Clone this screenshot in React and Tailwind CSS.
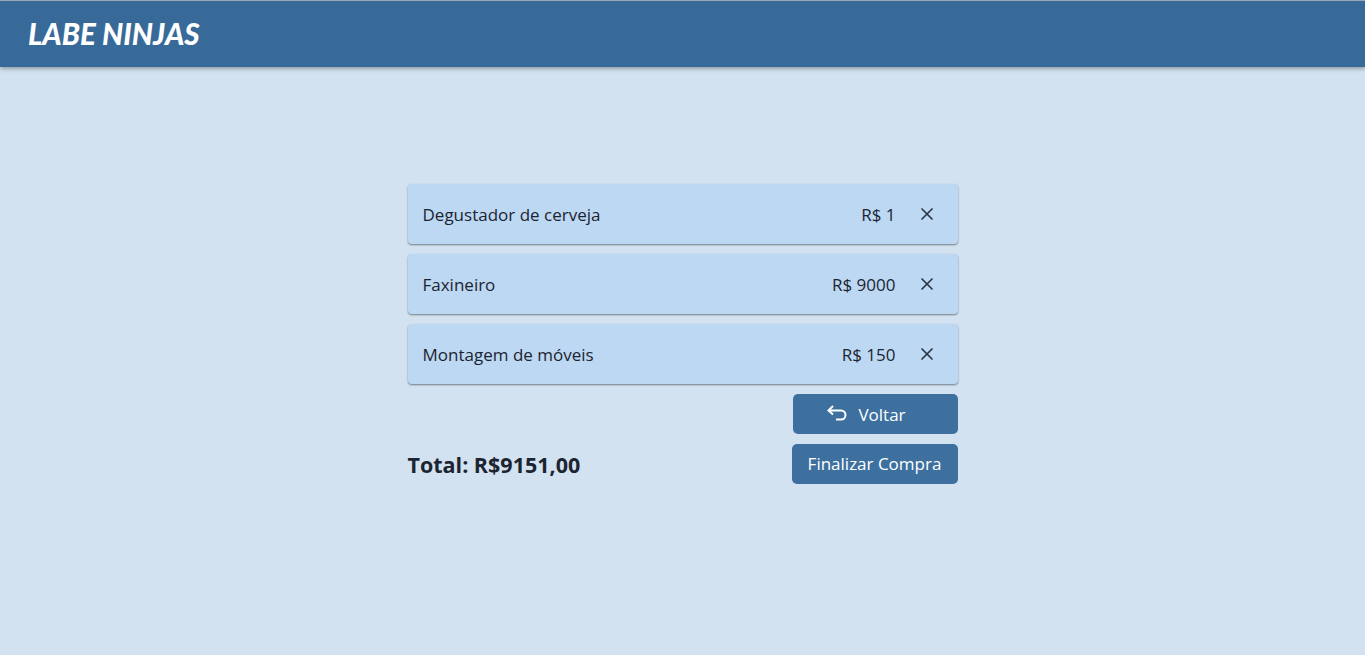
import { X } from "lucide-react";

const items = [
  { title: "Degustador de cerveja", price: "R$ 1" },
  { title: "Faxineiro", price: "R$ 9000" },
  { title: "Montagem de móveis", price: "R$ 150" },
];

function BackIcon() {
  return (
    <svg width="20" height="16" viewBox="0 0 20 16" fill="none" stroke="currentColor" strokeWidth="2" className="-mt-[2px]">
      <path d="M6 1 1.5 5.5 6 9.5" />
      <path d="M1.5 5.5H14a4.5 4.5 0 0 1 0 9H9" />
    </svg>
  );
}

export default function App() {
  return (
    <div className="min-h-screen bg-[#d3e2f1] font-['Open_Sans',sans-serif] text-[#1c2430]">
      {/* Header */}
      <header className="h-[67px] border-t border-[#9aa9b8] bg-[#376a99] pl-[28px] shadow-[0_2px_4px_rgba(0,0,0,0.3)]">
        <div className="pt-[14px] font-['Lato',sans-serif] text-[29.5px] leading-[38px] font-black text-white italic">
          LABE NINJAS
        </div>
      </header>

      <main className="mx-auto flex w-[550px] flex-col pt-[117px]">
        {/* Cart items */}
        <div className="flex flex-col gap-[10px]">
          {items.map((item) => (
            <div
              key={item.title}
              className="flex h-[60px] items-center justify-between rounded-[4px] bg-[#bcd8f3] pr-[21px] pl-[15px] shadow-[0_1px_2px_rgba(0,0,0,0.45)]"
            >
              <span className="pt-[2px] text-[17px]">{item.title}</span>
              <div className="flex items-center gap-[21px]">
                <span className="pt-[2px] text-[17px]">{item.price}</span>
                <X size={20} strokeWidth={2} className="text-[#2a3440]" />
              </div>
            </div>
          ))}
        </div>

        {/* Actions */}
        <div className="mt-[10px] flex justify-end">
          <button className="flex h-[40px] w-[165px] items-center justify-center gap-[11px] rounded-[5px] bg-[#3d709f] pr-[17px] text-[17px] text-white">
            <BackIcon />
            <span className="pt-[2px]">Voltar</span>
          </button>
        </div>
        <div className="mt-[10px] flex items-center justify-between">
          <span className="pt-[2px] text-[21.5px] font-bold">Total: R$9151,00</span>
          <button className="h-[40px] w-[166px] rounded-[5px] bg-[#3d709f] text-[17px] text-white">
            Finalizar Compra
          </button>
        </div>
      </main>
    </div>
  );
}
